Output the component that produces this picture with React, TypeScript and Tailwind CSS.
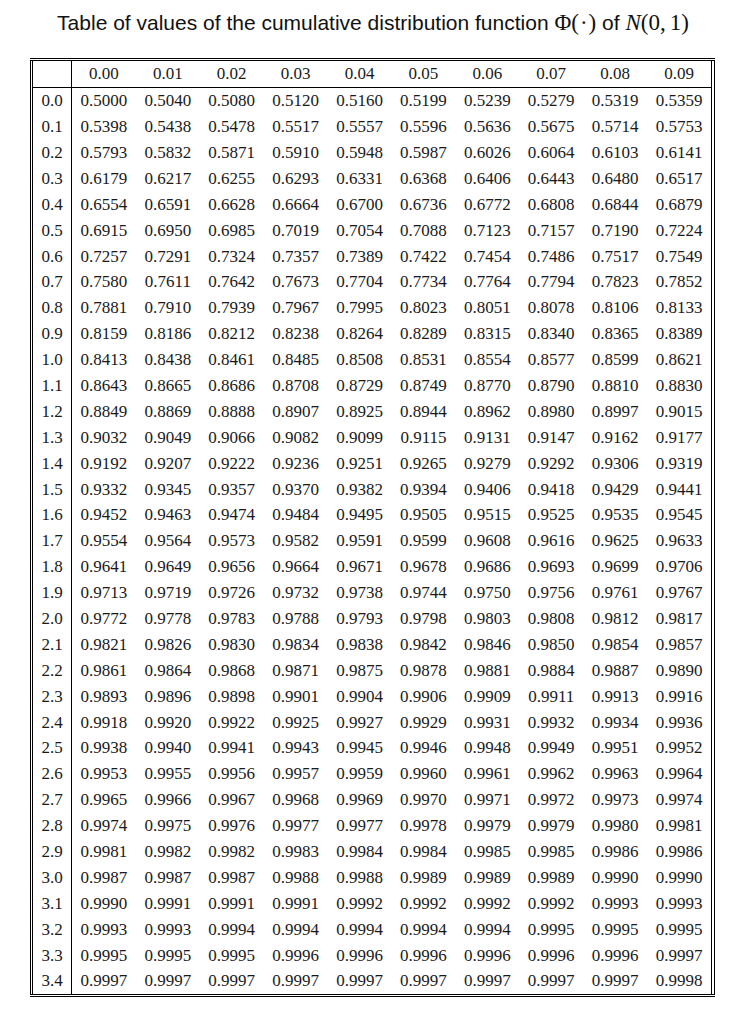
const serif = "font-['Liberation_Serif','Times_New_Roman',serif]"

const header = ['0.00', '0.01', '0.02', '0.03', '0.04', '0.05', '0.06', '0.07', '0.08', '0.09']

// fractional digits of Phi(z), one line per tenth of z
const raw = `5000 5040 5080 5120 5160 5199 5239 5279 5319 5359
5398 5438 5478 5517 5557 5596 5636 5675 5714 5753
5793 5832 5871 5910 5948 5987 6026 6064 6103 6141
6179 6217 6255 6293 6331 6368 6406 6443 6480 6517
6554 6591 6628 6664 6700 6736 6772 6808 6844 6879
6915 6950 6985 7019 7054 7088 7123 7157 7190 7224
7257 7291 7324 7357 7389 7422 7454 7486 7517 7549
7580 7611 7642 7673 7704 7734 7764 7794 7823 7852
7881 7910 7939 7967 7995 8023 8051 8078 8106 8133
8159 8186 8212 8238 8264 8289 8315 8340 8365 8389
8413 8438 8461 8485 8508 8531 8554 8577 8599 8621
8643 8665 8686 8708 8729 8749 8770 8790 8810 8830
8849 8869 8888 8907 8925 8944 8962 8980 8997 9015
9032 9049 9066 9082 9099 9115 9131 9147 9162 9177
9192 9207 9222 9236 9251 9265 9279 9292 9306 9319
9332 9345 9357 9370 9382 9394 9406 9418 9429 9441
9452 9463 9474 9484 9495 9505 9515 9525 9535 9545
9554 9564 9573 9582 9591 9599 9608 9616 9625 9633
9641 9649 9656 9664 9671 9678 9686 9693 9699 9706
9713 9719 9726 9732 9738 9744 9750 9756 9761 9767
9772 9778 9783 9788 9793 9798 9803 9808 9812 9817
9821 9826 9830 9834 9838 9842 9846 9850 9854 9857
9861 9864 9868 9871 9875 9878 9881 9884 9887 9890
9893 9896 9898 9901 9904 9906 9909 9911 9913 9916
9918 9920 9922 9925 9927 9929 9931 9932 9934 9936
9938 9940 9941 9943 9945 9946 9948 9949 9951 9952
9953 9955 9956 9957 9959 9960 9961 9962 9963 9964
9965 9966 9967 9968 9969 9970 9971 9972 9973 9974
9974 9975 9976 9977 9977 9978 9979 9979 9980 9981
9981 9982 9982 9983 9984 9984 9985 9985 9986 9986
9987 9987 9987 9988 9988 9989 9989 9989 9990 9990
9990 9991 9991 9991 9992 9992 9992 9992 9993 9993
9993 9993 9994 9994 9994 9994 9994 9995 9995 9995
9995 9995 9995 9996 9996 9996 9996 9996 9996 9997
9997 9997 9997 9997 9997 9997 9997 9997 9997 9998`

const rows = raw.split('\n').map((line, i) => ({
  z: (i / 10).toFixed(1),
  values: line.trim().split(' ').map((v) => `0.${v}`),
}))

function Title() {
  return (
    <div className="h-[58px] pt-[9px] text-center text-[21px] leading-[28px] text-[#111] font-['Liberation_Sans',Arial,sans-serif]">
      Table of values of the cumulative distribution function{' '}
      <span className={`${serif} text-[23px]`}>
        Φ(<span className="px-[1px]">·</span>)
      </span>{' '}
      of{' '}
      <span className={`${serif} text-[23px]`}>
        <i>N</i>(0,<span className="pl-[4px]">1</span>)
      </span>
    </div>
  )
}

export default function App() {
  return (
    <div className="h-[1024px] w-[746px] bg-white">
      <Title />
      <div className="ml-[30px] w-[685px] border-y-[3px] border-double border-black">
        <div
          className={`border-l-[3px] border-r-[4px] border-double border-black text-[17px] text-[#1a1a1a] ${serif}`}
        >
          <div className="grid h-[27px] grid-cols-[39px_repeat(10,1fr)] border-b border-black">
            <div className="border-r border-black" />
            {header.map((h) => (
              <div key={h} className="flex items-center justify-center">
                {h}
              </div>
            ))}
          </div>
          {rows.map((r) => (
            <div key={r.z} className="grid h-[25.9px] grid-cols-[39px_repeat(10,1fr)]">
              <div className="flex items-center justify-center border-r border-black">{r.z}</div>
              {r.values.map((v, j) => (
                <div key={j} className="flex items-center justify-center">
                  {v}
                </div>
              ))}
            </div>
          ))}
        </div>
      </div>
    </div>
  )
}
